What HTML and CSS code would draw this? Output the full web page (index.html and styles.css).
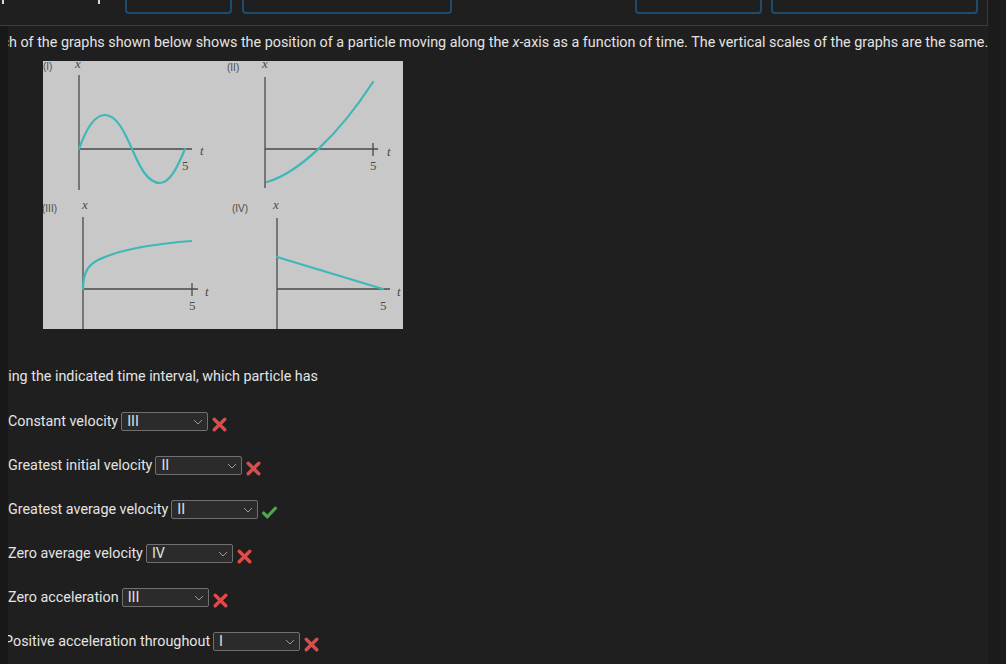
FILE: index.html
```html
<!DOCTYPE html>
<html>
<head>
<meta charset="utf-8">
<link rel="stylesheet" href="styles.css">
</head>
<body>
<div class="page">
  <div class="left-col">
    <div class="topbar">
      <span class="mark mark-a"></span>
      <span class="mark mark-b"></span>
      <div class="tbtn tbtn-1"></div>
      <div class="tbtn tbtn-2"></div>
      <div class="tbtn tbtn-3"></div>
      <div class="tbtn tbtn-4"></div>
    </div>
    <div class="body-row">
      <div class="left-strip"></div>
      <div class="content">
        <p class="intro">Each of the graphs shown below shows the position of a particle moving along the <i>x</i>-axis as a function of time. The vertical scales of the graphs are the same.</p>
        <svg class="graphs" width="360" height="268" viewBox="0 0 360 268">
          <rect x="0" y="0" width="360" height="268" fill="#c8c8c8"/>
          <g stroke="#4a4a4a" stroke-width="1.3" fill="none">
            <line x1="36" y1="14" x2="36" y2="129"/>
            <line x1="36" y1="88" x2="149" y2="88"/>
            <line x1="222" y1="16" x2="222" y2="127"/>
            <line x1="222" y1="88" x2="335" y2="88"/>
            <line x1="330" y1="82" x2="330" y2="95"/>
            <line x1="40" y1="156" x2="40" y2="268"/>
            <line x1="40" y1="228" x2="155" y2="228"/>
            <line x1="149" y1="222" x2="149" y2="235"/>
            <line x1="234" y1="157" x2="234" y2="268"/>
            <line x1="234" y1="228" x2="347" y2="228"/>
          </g>
          <g stroke="#3fb7b7" stroke-width="2.2" fill="none" stroke-linecap="round">
            <path d="M36,88 C43,68 51,54 62,54 C74,54 82,72 89,88 C96,104 104,122 117,122 C128,122 136,102 142,88"/>
            <path d="M224,121 C255,112 295,75 330,21"/>
            <path d="M40,228 C40,212 45,204 55,199 C75,189 110,183 148,180"/>
            <path d="M234,196 L340,228"/>
          </g>
          <g class="glab">
            <text x="0" y="9">(I)</text>
            <text x="184" y="10">(II)</text>
            <text x="-1" y="151">(III)</text>
            <text x="189" y="151">(IV)</text>
          </g>
          <g class="ilab">
            <text x="32" y="7">x</text>
            <text x="219" y="7">x</text>
            <text x="39" y="148">x</text>
            <text x="230" y="148">x</text>
            <text x="157" y="94">t</text>
            <text x="344" y="95">t</text>
            <text x="162" y="235">t</text>
            <text x="354" y="235">t</text>
          </g>
          <g class="nlab">
            <text x="139" y="109">5</text>
            <text x="327" y="109">5</text>
            <text x="146" y="249">5</text>
            <text x="337" y="249">5</text>
          </g>
        </svg>
        <p class="ask">During the indicated time interval, which particle has</p>
        <div class="rows">
          <div class="row">
            <span class="label">Constant velocity</span>
            <div class="sel"><span>III</span><svg class="chev" width="10" height="6" viewBox="0 0 10 6"><path d="M1,1 L5,5 L9,1" fill="none" stroke="#9a9a9a" stroke-width="1"/></svg></div>
            <svg class="mk" width="17" height="17" viewBox="0 0 16 16"><path d="M3,3 L13,13 M13,3 L3,13" stroke="#dd4b4b" stroke-width="3.2" stroke-linecap="round"/></svg>
          </div>
          <div class="row">
            <span class="label">Greatest initial velocity</span>
            <div class="sel"><span>II</span><svg class="chev" width="10" height="6" viewBox="0 0 10 6"><path d="M1,1 L5,5 L9,1" fill="none" stroke="#9a9a9a" stroke-width="1"/></svg></div>
            <svg class="mk" width="17" height="17" viewBox="0 0 16 16"><path d="M3,3 L13,13 M13,3 L3,13" stroke="#dd4b4b" stroke-width="3.2" stroke-linecap="round"/></svg>
          </div>
          <div class="row">
            <span class="label">Greatest average velocity</span>
            <div class="sel"><span>II</span><svg class="chev" width="10" height="6" viewBox="0 0 10 6"><path d="M1,1 L5,5 L9,1" fill="none" stroke="#9a9a9a" stroke-width="1"/></svg></div>
            <svg class="mk" width="17" height="17" viewBox="0 0 16 16"><path d="M2.5,8.5 L6,12 L13.5,4" fill="none" stroke="#4caa4c" stroke-width="3" stroke-linecap="round" stroke-linejoin="round"/></svg>
          </div>
          <div class="row">
            <span class="label">Zero average velocity</span>
            <div class="sel"><span>IV</span><svg class="chev" width="10" height="6" viewBox="0 0 10 6"><path d="M1,1 L5,5 L9,1" fill="none" stroke="#9a9a9a" stroke-width="1"/></svg></div>
            <svg class="mk" width="17" height="17" viewBox="0 0 16 16"><path d="M3,3 L13,13 M13,3 L3,13" stroke="#dd4b4b" stroke-width="3.2" stroke-linecap="round"/></svg>
          </div>
          <div class="row">
            <span class="label">Zero acceleration</span>
            <div class="sel"><span>III</span><svg class="chev" width="10" height="6" viewBox="0 0 10 6"><path d="M1,1 L5,5 L9,1" fill="none" stroke="#9a9a9a" stroke-width="1"/></svg></div>
            <svg class="mk" width="17" height="17" viewBox="0 0 16 16"><path d="M3,3 L13,13 M13,3 L3,13" stroke="#dd4b4b" stroke-width="3.2" stroke-linecap="round"/></svg>
          </div>
          <div class="row row-shift">
            <span class="label">Positive acceleration throughout</span>
            <div class="sel"><span>I</span><svg class="chev" width="10" height="6" viewBox="0 0 10 6"><path d="M1,1 L5,5 L9,1" fill="none" stroke="#9a9a9a" stroke-width="1"/></svg></div>
            <svg class="mk" width="17" height="17" viewBox="0 0 16 16"><path d="M3,3 L13,13 M13,3 L3,13" stroke="#dd4b4b" stroke-width="3.2" stroke-linecap="round"/></svg>
          </div>
        </div>
      </div>
    </div>
  </div>
  <div class="right-strip"></div>
</div>
</body>
</html>
```

FILE: styles.css
```css
html, body {
  margin: 0;
  padding: 0;
  background: #1b1b1b;
  height: 664px;
  overflow: hidden;
}
body {
  font-family: Roboto, "Liberation Sans", sans-serif;
  font-size: 14.35px;
  color: #e4e4e4;
}
.page {
  display: flex;
  width: 1006px;
  height: 664px;
}
.left-col {
  width: 988px;
  display: flex;
  flex-direction: column;
  background: #1f1f1f;
}
.topbar {
  position: relative;
  border-bottom: 1px solid #3d3d3d;
  border-right: 1px solid #3a3a3a;
  display: flex;
  align-items: flex-start;
  box-sizing: border-box;
  height: 26px;
}
.mark {
  position: absolute;
  top: 0;
  width: 2px;
  height: 4px;
  background: #d8d8d8;
}
.mark-a { left: 2px; }
.mark-b { left: 98px; }
.tbtn {
  margin-top: -6px;
  height: 20px;
  border: 2px solid #1d4d6e;
  border-radius: 4px;
  box-sizing: border-box;
}
.tbtn-1 { margin-left: 125px; width: 107px; }
.tbtn-2 { margin-left: 10px; width: 210px; }
.tbtn-3 { margin-left: 183px; width: 127px; }
.tbtn-4 { margin-left: 9px; width: 207px; }
.body-row {
  display: flex;
  flex: 1;
}
.left-strip {
  width: 8px;
  background: #181818;
}
.content {
  flex: 1;
  overflow: hidden;
  white-space: nowrap;
}
.intro {
  margin: 8px 0 0 -22.5px;
  line-height: 17px;
}
.graphs {
  display: block;
  margin: 10px 0 0 35px;
}
.glab text {
  font-family: "Liberation Sans", sans-serif;
  font-size: 10px;
  fill: #4a4a4a;
}
.ilab text {
  font-family: "Liberation Serif", serif;
  font-style: italic;
  font-size: 13px;
  fill: #4a4a4a;
}
.nlab text {
  font-family: "Liberation Serif", serif;
  font-size: 13px;
  fill: #4a4a4a;
}
.ask {
  margin: 39px 0 0 -22px;
  line-height: 17px;
}
.rows {
  margin-top: 27px;
  display: flex;
  flex-direction: column;
  gap: 25px;
}
.row {
  display: flex;
  align-items: center;
  height: 19px;
}
.row-shift { margin-left: -4px; }
.label {
  margin-right: 3px;
}
.sel {
  width: 87px;
  height: 19px;
  box-sizing: border-box;
  border: 1px solid #707070;
  border-radius: 2px;
  background: #2b2b2b;
  display: flex;
  align-items: center;
  justify-content: space-between;
  padding: 0 4px 0 5px;
  color: #e0e0e0;
}
.chev { display: block; }
.mk {
  margin-left: 3px;
  margin-top: 6px;
}
```
